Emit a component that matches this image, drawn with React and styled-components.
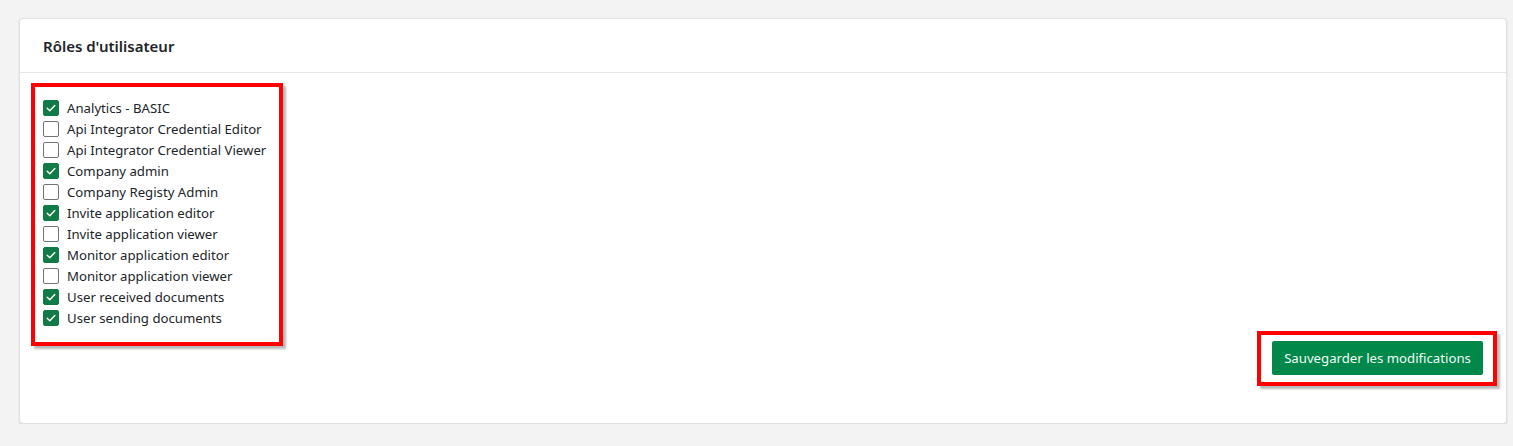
import React, { useState } from "react";
import styled, { createGlobalStyle } from "styled-components";

const GlobalStyle = createGlobalStyle`
  html, body {
    margin: 0;
    padding: 0;
    background: #f2f3f2;
    font-family: "Noto Sans", "Open Sans", Arial, sans-serif;
    color: #212529;
  }
  #root {
    padding: 18px 6px 0 19px;
  }
`;

const Card = styled.section`
  background: #fff;
  border: 1px solid #dfe2e1;
  border-radius: 4px;
  box-shadow: 0 1px 2px rgba(0, 0, 0, 0.14);
  height: 406px;
  box-sizing: border-box;
`;

const CardHeader = styled.header`
  height: 54px;
  padding: 0 23px;
  display: flex;
  align-items: center;
  border-bottom: 1px solid #e4e6e5;
  box-sizing: border-box;
`;

const Title = styled.h2`
  margin: 0;
  font-size: 15px;
  font-weight: 600;
  color: #212529;
`;

const CardBody = styled.div`
  display: flex;
  flex-direction: column;
  padding: 10px 9px 0 11px;
`;

const Highlight = styled.div`
  border: 4px solid #ff0000;
  box-shadow: 3px 3px 2px rgba(0, 0, 0, 0.28);
  align-self: ${(p) => (p.end ? "flex-end" : "flex-start")};
  padding: ${(p) => p.pad};
  background: #fff;
`;

const RoleList = styled.ul`
  list-style: none;
  margin: 0;
  padding: 0;
  width: 236px;
`;

const RoleRow = styled.li`
  display: flex;
  align-items: center;
  gap: 8px;
  height: 21px;
  font-size: 13.2px;
  color: #212529;
  cursor: pointer;
  user-select: none;
`;

const Box = styled.span`
  width: 16px;
  height: 16px;
  box-sizing: border-box;
  border-radius: 2px;
  border: 1px solid ${(p) => (p.checked ? "#117a46" : "#6f7478")};
  background: ${(p) => (p.checked ? "#117a46" : "#fff")};
  display: flex;
  align-items: center;
  justify-content: center;
  flex-shrink: 0;
`;

const Footer = styled.div`
  display: flex;
  justify-content: flex-end;
  margin-top: -15px;
`;

const SaveButton = styled.button`
  width: 211px;
  height: 34px;
  border: none;
  border-radius: 2px;
  background: #00874a;
  color: #f4fbf6;
  font-family: inherit;
  font-size: 13.2px;
  cursor: pointer;
`;

const roles = [
  ["Analytics - BASIC", true],
  ["Api Integrator Credential Editor", false],
  ["Api Integrator Credential Viewer", false],
  ["Company admin", true],
  ["Company Registy Admin", false],
  ["Invite application editor", true],
  ["Invite application viewer", false],
  ["Monitor application editor", true],
  ["Monitor application viewer", false],
  ["User received documents", true],
  ["User sending documents", true],
];

function Check({ checked }) {
  return (
    <Box checked={checked}>
      {checked && (
        <svg width="12" height="12" viewBox="0 0 12 12">
          <path d="M2.2 6.2l2.6 2.5 5-5.2" fill="none" stroke="#fff" strokeWidth="1.4" strokeLinecap="round" strokeLinejoin="round" />
        </svg>
      )}
    </Box>
  );
}

export default function App() {
  const [state, setState] = useState(roles.map((r) => r[1]));
  const toggle = (i) => setState((s) => s.map((v, j) => (j === i ? !v : v)));

  return (
    <>
      <GlobalStyle />
      <Card>
        <CardHeader>
          <Title>Rôles d'utilisateur</Title>
        </CardHeader>
        <CardBody>
          <Highlight pad="10px 0 14px 8px">
            <RoleList>
              {roles.map(([name], i) => (
                <RoleRow key={name} onClick={() => toggle(i)}>
                  <Check checked={state[i]} />
                  {name}
                </RoleRow>
              ))}
            </RoleList>
          </Highlight>
          <Footer>
            <Highlight end pad="6px 10px 7px 11px">
              <SaveButton>Sauvegarder les modifications</SaveButton>
            </Highlight>
          </Footer>
        </CardBody>
      </Card>
    </>
  );
}
